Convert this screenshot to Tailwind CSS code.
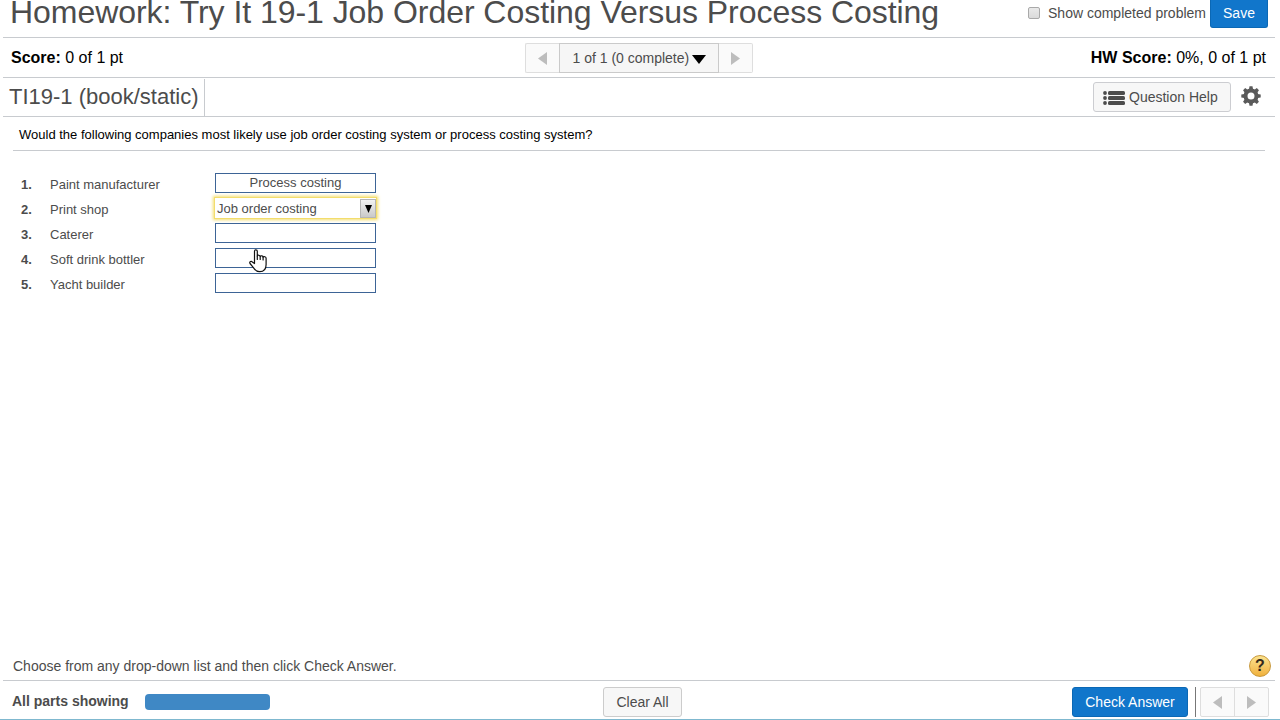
<!DOCTYPE html>
<html lang="en">
<head>
    <meta charset="UTF-8">
    <meta name="viewport" content="width=device-width, initial-scale=1.0">
    <title>Homework: Try It 19-1</title>
    <script src="https://cdn.jsdelivr.net/npm/@tailwindcss/browser@4"></script>
</head>
<body class="bg-white font-['Liberation_Sans',Arial,sans-serif] text-sm text-[#4c4c4c]">
    <div class="relative flex flex-col w-[1280px] h-[720px] overflow-hidden border-b border-[#7fb8cf]">

        <!-- Title bar -->
        <header class="flex justify-between h-[38px] ml-[3px] mr-[5px] pl-[7px] pr-[7px] border-b border-[#c8cbcf]">
            <h1 class="text-[32px] leading-[36px] tracking-[-0.045px] -mt-[6px] whitespace-nowrap">Homework: Try It 19-1 Job Order Costing Versus Process Costing</h1>
            <div class="flex items-start">
                <span class="w-3 h-3 mt-[7px] mr-2 rounded-[2px] border border-[#a9a9a9] bg-linear-to-b from-[#e9e9e9] to-[#dadada]"></span>
                <span class="leading-4 mt-[5px] mr-1">Show completed problem</span>
                <button class="w-[58px] h-[28px] pb-[2px] rounded-b-[3px] border border-t-0 border-[#0b68b5] bg-[#1176cb] text-white leading-[24px]">Save</button>
            </div>
        </header>

        <!-- Score and question navigation -->
        <section class="grid grid-cols-3 items-center h-10 ml-[3px] mr-[5px] pl-2 pr-[9px] border-b border-[#c8cbcf] text-base text-black">
            <div><b>Score:</b> 0 of 1 pt</div>
            <div class="flex h-[30px] mt-px ml-[2px] w-[228px] justify-self-center text-sm text-[#4c4c4c]">
                <button class="flex items-center justify-center w-[34px] rounded-l-[2px] border border-r-0 border-[#dedede] bg-[#fafafa]">
                    <svg class="w-[9px] h-[13px] mt-px" viewBox="0 0 9 13" fill="#bdbdbd"><path d="M9 0v13L0 6.500z"/></svg>
                </button>
                <button class="flex items-center w-[160px] pl-3 border border-[#cacaca] bg-[#f6f6f6] whitespace-nowrap">
                    1 of 1 (0 complete)
                    <svg class="w-[14px] h-[9px] ml-[3px] mt-[2px]" viewBox="0 0 14 9" fill="#000"><path d="M0 0h14L7 9z"/></svg>
                </button>
                <button class="flex items-center justify-center w-[34px] rounded-r-[2px] border border-l-0 border-[#dedede] bg-[#fafafa]">
                    <svg class="w-[9px] h-[13px] mt-px" viewBox="0 0 9 13" fill="#bdbdbd"><path d="M0 0v13l9-6.500z"/></svg>
                </button>
            </div>
            <div class="text-right whitespace-nowrap"><b>HW Score:</b> 0%, 0 of 1 pt</div>
        </section>

        <!-- Question heading -->
        <section class="flex justify-between h-[39px] ml-[3px] mr-[5px] pl-[6px] pr-[14px] border-b border-[#c8cbcf]">
            <h2 class="h-[37px] mt-px w-[196px] border-r border-[#c8cbcf] text-[22px] leading-[36px] whitespace-nowrap">TI19-1 (book/static)</h2>
            <div class="flex items-start">
                <button class="flex items-center w-[138px] h-[30px] mt-1 pl-[9px] rounded-[3px] border border-[#cccdd1] bg-[#f7f7f7]">
                    <svg class="w-[22px] h-[14px] mr-1 mt-[2px]" viewBox="0 0 22 14" fill="#4c4c4c">
                        <circle cx="2" cy="2" r="1.900"/><circle cx="2" cy="7" r="1.900"/><circle cx="2" cy="12" r="1.900"/>
                        <rect x="5" y="0" width="17" height="4" rx="1.500"/><rect x="5" y="5" width="17" height="4" rx="1.500"/><rect x="5" y="10" width="17" height="4" rx="1.500"/>
                    </svg>
                    Question Help
                </button>
                <svg class="w-5 h-5 ml-[10px] mt-2" viewBox="-10 -10 20 20">
                    <circle r="5.500" fill="none" stroke="#5a5a5a" stroke-width="4"/>
                    <g fill="#5a5a5a">
                        <path id="tooth" d="M-2.100-6.500-1.500-9.700h3L2.100-6.500z"/>
                        <use href="#tooth" transform="rotate(45)"/><use href="#tooth" transform="rotate(90)"/>
                        <use href="#tooth" transform="rotate(135)"/><use href="#tooth" transform="rotate(180)"/>
                        <use href="#tooth" transform="rotate(225)"/><use href="#tooth" transform="rotate(270)"/>
                        <use href="#tooth" transform="rotate(315)"/>
                    </g>
                </svg>
            </div>
        </section>

        <!-- Question body -->
        <main class="flex-1 ml-[13px] mr-[15px] text-[13px]">
            <p class="h-[34px] pl-[6px] leading-[35px] border-b border-[#c8cbcf] text-black">Would the following companies most likely use job order costing system or process costing system?</p>
            <div class="flex flex-col gap-[5px] mt-[22px] pl-2">
                <div class="flex h-5 leading-[24px]">
                    <b class="w-[29px]">1.</b><span class="w-[165px]">Paint manufacturer</span>
                    <div class="w-[161px] border border-[#3d6496] text-center leading-[18px]">Process costing</div>
                </div>
                <div class="flex h-5 leading-[24px]">
                    <b class="w-[29px]">2.</b><span class="w-[165px]">Print shop</span>
                    <div class="flex w-[161px] h-5 pl-[2px] leading-[22px] outline-1 outline-[#f3dd6d] shadow-[0_0_3px_2px_#f3dd6d]">
                        <span class="flex-1">Job order costing</span>
                        <span class="flex items-center justify-center w-4 h-[19px] mt-px border border-[#b5b5b5] bg-linear-to-b from-[#f2f2f2] to-[#c9c9c9]">
                            <svg class="w-[7px] h-2" viewBox="0 0 7 8" fill="#000"><path d="M0 0h7L3.500 8z"/></svg>
                        </span>
                    </div>
                </div>
                <div class="flex h-5 leading-[24px]">
                    <b class="w-[29px]">3.</b><span class="w-[165px]">Caterer</span>
                    <div class="w-[161px] border border-[#3d6496]"></div>
                </div>
                <div class="flex h-5 leading-[24px]">
                    <b class="w-[29px]">4.</b><span class="w-[165px]">Soft drink bottler</span>
                    <div class="w-[161px] border border-[#3d6496]"></div>
                </div>
                <div class="flex h-5 leading-[24px]">
                    <b class="w-[29px]">5.</b><span class="w-[165px]">Yacht builder</span>
                    <div class="w-[161px] border border-[#3d6496]"></div>
                </div>
            </div>
        </main>

        <!-- Hint line -->
        <section class="flex justify-between items-start h-[28px] pl-[13px] pr-[9px]">
            <span class="leading-4 mt-[6px]">Choose from any drop-down list and then click Check Answer.</span>
            <span class="flex items-center justify-center w-[22px] h-[22px] mt-[3px] rounded-full border border-[#c9993c] bg-linear-to-b from-[#fbe38e] to-[#f0b13a] text-base font-bold text-[#33291c]">?</span>
        </section>

        <!-- Footer -->
        <footer class="grid grid-cols-[590px_1fr_auto] items-start h-[39px] ml-[3px] mr-[5px] pl-[9px] pr-[6px] border-t border-[#c8cbcf]">
            <div class="flex items-center h-[39px]">
                <b class="w-[133px]">All parts showing</b>
                <span class="w-[125px] h-4 mt-[2px] rounded-[4px] bg-[#3f88c5]"></span>
            </div>
            <button class="w-[79px] h-[30px] mt-[6px] ml-px rounded-[3px] border border-[#cccccc] bg-[#f7f7f7]">Clear All</button>
            <div class="flex mt-[6px]">
                <button class="w-[116px] h-[30px] rounded-[3px] border border-[#0b68b5] bg-[#1176cb] text-white">Check Answer</button>
                <span class="w-px h-[30px] ml-[7px] bg-[#777777]"></span>
                <div class="flex h-[30px] w-[69px] ml-1 rounded-[2px] border border-[#dedede] bg-[#fafafa]">
                    <button class="flex flex-1 items-center justify-center border-r border-[#dedede]">
                        <svg class="w-[9px] h-[13px] mt-px" viewBox="0 0 9 13" fill="#bdbdbd"><path d="M9 0v13L0 6.500z"/></svg>
                    </button>
                    <button class="flex flex-1 items-center justify-center">
                        <svg class="w-[9px] h-[13px] mt-px" viewBox="0 0 9 13" fill="#bdbdbd"><path d="M0 0v13l9-6.500z"/></svg>
                    </button>
                </div>
            </div>
        </footer>

        <!-- Hand cursor -->
        <svg class="absolute left-[249px] top-[249px] w-[19px] h-6" viewBox="0 0 19 24" fill="#fff" stroke="#111" stroke-width="1.200" stroke-linejoin="round" stroke-linecap="round">
            <path d="M5.500 14.500V2.300C5.500.3 8.300.3 8.300 2.300V7c.2-1.200 2.800-1 2.900.4.500-1 2.800-.8 2.900.7.700-.9 3-.5 3 1.200v6.200c0 4-2 7.200-6.300 7.200-3.300 0-4.800-1.500-6.200-3.800L1 14.500c-.9-1.700 1.200-2.900 2.300-1.600z"/>
            <path d="M8.300 7v3.500M11.200 7.500v3M14.100 8.200v2.800" fill="none"/>
        </svg>
    </div>
</body>
</html>
